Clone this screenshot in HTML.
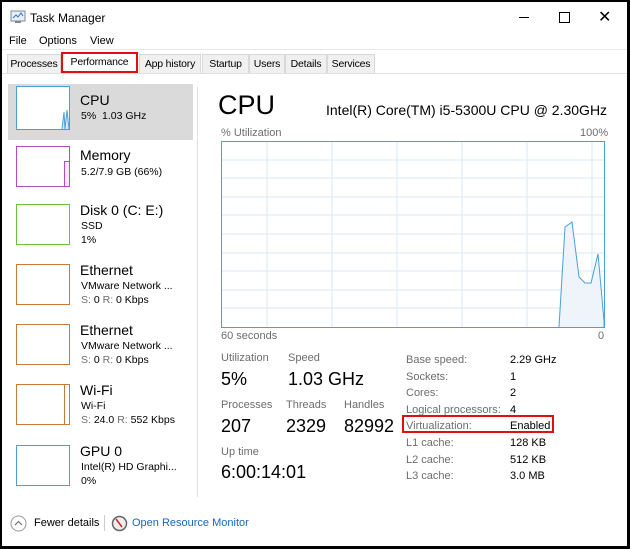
<!DOCTYPE html><html><head><style>
body{margin:0;width:630px;height:549px;overflow:hidden;background:#fff;font-family:"Liberation Sans",sans-serif;color:#000;position:relative}
.a{position:absolute;white-space:nowrap}
.s{font-size:11px}
.g{color:#6d6d6d}
.tab{position:absolute;top:54px;height:19px;background:#f0f0f0;border:1px solid #d9d9d9;border-bottom:none;font-size:10.5px;letter-spacing:-0.2px;line-height:19px;text-align:center;box-sizing:border-box}
.box{position:absolute;left:16px;width:54px;height:41px;box-sizing:border-box;border:1px solid}
.t1{font-size:14px}
.t2{font-size:10.5px}
</style></head><body>
<div class="a" style="left:0;top:0;border:2px solid #000;border-right-width:3px;border-bottom-width:3px;box-sizing:border-box;width:630px;height:549px"></div>
<svg class="a" style="left:10px;top:10px" width="16" height="14"><rect x="1" y="1" width="14" height="10" fill="#e8eef4" stroke="#7a8a99"/><polyline points="3,8 6,5 8,7 11,3 13,6" fill="none" stroke="#2a78c0"/><rect x="5" y="11" width="6" height="2" fill="#888"/></svg>
<div class="a" style="left:30px;top:11px;font-size:12px">Task Manager</div>
<div class="a" style="left:519px;top:17px;width:10px;height:1px;background:#000"></div>
<div class="a" style="left:559px;top:12px;width:9px;height:9px;border:1px solid #000"></div>
<div class="a" style="left:598px;top:7px;font-size:16px">✕</div>
<div class="a" style="left:9px;top:35px;font-size:11px">File</div>
<div class="a" style="left:39px;top:35px;font-size:11px">Options</div>
<div class="a" style="left:90px;top:35px;font-size:11px">View</div>
<div class="a" style="left:2px;top:49px;width:625px;height:1px;background:#e8e8e8"></div>
<div class="a" style="left:2px;top:73px;width:625px;height:1px;background:#e0e0e0"></div>
<div class="tab" style="left:7px;width:54px">Processes</div>
<div class="tab" style="left:61px;width:77px;top:52px;height:21px;background:#fff;border:2px solid #e01010;line-height:17px">Performance</div>
<div class="tab" style="left:139px;width:62px">App history</div>
<div class="tab" style="left:202px;width:47px">Startup</div>
<div class="tab" style="left:249px;width:36px">Users</div>
<div class="tab" style="left:285px;width:42px">Details</div>
<div class="tab" style="left:327px;width:48px">Services</div>

<div class="a" style="left:8px;top:84px;width:185px;height:56px;background:#dadada"></div>
<div class="box" style="top:86px;height:44px;border-color:#4a9fd8;background:#fff"></div>
<svg class="a" style="left:60px;top:100px" width="10" height="30"><polyline points="2,29 4,12 5,29 7,10 9,29" fill="#d8e8f4" stroke="#4a9fd8"/></svg>
<div class="a t1" style="left:80px;top:92px">CPU</div>
<div class="a t2" style="left:81px;top:110px">5%&nbsp; 1.03 GHz</div>

<div class="box" style="top:146px;border-color:#b44ac8"></div>
<div class="a" style="left:64px;top:161px;width:4px;height:24px;border:1px solid #b44ac8;background:#f4eaf6"></div>
<div class="a t1" style="left:80px;top:147px">Memory</div>
<div class="a t2" style="left:81px;top:166px">5.2/7.9 GB (66%)</div>

<div class="box" style="top:204px;border-color:#6cc040"></div>
<div class="a t1" style="left:80px;top:202px">Disk 0 (C: E:)</div>
<div class="a t2" style="left:81px;top:220px">SSD</div>
<div class="a t2" style="left:81px;top:234px">1%</div>

<div class="box" style="top:264px;border-color:#c87a3a"></div>
<div class="a t1" style="left:80px;top:262px">Ethernet</div>
<div class="a t2" style="left:81px;top:280px">VMware Network ...</div>
<div class="a t2" style="left:81px;top:294px"><span class="g">S:</span> 0 <span class="g">R:</span> 0 Kbps</div>

<div class="box" style="top:324px;border-color:#c87a3a"></div>
<div class="a t1" style="left:80px;top:322px">Ethernet</div>
<div class="a t2" style="left:81px;top:340px">VMware Network ...</div>
<div class="a t2" style="left:81px;top:354px"><span class="g">S:</span> 0 <span class="g">R:</span> 0 Kbps</div>

<div class="box" style="top:384px;border-color:#c87a3a"></div>
<div class="a" style="left:64px;top:385px;width:4px;height:39px;border-left:1px solid #c87a3a"></div>
<div class="a t1" style="left:80px;top:382px">Wi-Fi</div>
<div class="a t2" style="left:81px;top:400px">Wi-Fi</div>
<div class="a t2" style="left:81px;top:414px"><span class="g">S:</span> 24.0 <span class="g">R:</span> 552 Kbps</div>

<div class="box" style="top:445px;border-color:#4a9fd8"></div>
<div class="a t1" style="left:80px;top:443px">GPU 0</div>
<div class="a t2" style="left:81px;top:461px">Intel(R) HD Graphi...</div>
<div class="a t2" style="left:81px;top:475px">0%</div>

<div class="a" style="left:197px;top:87px;width:1px;height:410px;background:#e0e0e0"></div>

<div class="a" style="left:218px;top:90px;font-size:27px">CPU</div>
<div class="a" style="left:326px;top:102px;font-size:14px">Intel(R) Core(TM) i5-5300U CPU @ 2.30GHz</div>
<div class="a s g" style="left:221px;top:127px">% Utilization</div>
<div class="a s g" style="left:580px;top:127px">100%</div>
<svg class="a" style="left:221px;top:141px" width="384" height="187">
<g stroke="#d9eaf6" stroke-width="1">
<line x1="46" y1="0" x2="46" y2="187"/><line x1="111" y1="0" x2="111" y2="187"/><line x1="176" y1="0" x2="176" y2="187"/><line x1="241" y1="0" x2="241" y2="187"/><line x1="306" y1="0" x2="306" y2="187"/><line x1="371" y1="0" x2="371" y2="187"/>
<line x1="0" y1="19" x2="384" y2="19"/><line x1="0" y1="37" x2="384" y2="37"/><line x1="0" y1="56" x2="384" y2="56"/><line x1="0" y1="74" x2="384" y2="74"/><line x1="0" y1="93" x2="384" y2="93"/><line x1="0" y1="112" x2="384" y2="112"/><line x1="0" y1="130" x2="384" y2="130"/><line x1="0" y1="149" x2="384" y2="149"/><line x1="0" y1="167" x2="384" y2="167"/>
</g>
<polyline points="338,186 344,86 351,81 358,136 364,142 370,142 377,113 383,180 383,186" fill="#eef4fa" stroke="#4a9fd8" stroke-width="1"/>
<rect x="0.5" y="0.5" width="383" height="186" fill="none" stroke="#4a9fd8"/>
</svg>
<div class="a s g" style="left:221px;top:330px">60 seconds</div>
<div class="a s g" style="left:598px;top:330px">0</div>

<div class="a s g" style="left:221px;top:352px">Utilization</div>
<div class="a s g" style="left:288px;top:352px">Speed</div>
<div class="a" style="left:221px;top:369px;font-size:18px">5%</div>
<div class="a" style="left:288px;top:369px;font-size:18px">1.03 GHz</div>
<div class="a s g" style="left:221px;top:399px">Processes</div>
<div class="a s g" style="left:286px;top:399px">Threads</div>
<div class="a s g" style="left:344px;top:399px">Handles</div>
<div class="a" style="left:221px;top:416px;font-size:18px">207</div>
<div class="a" style="left:286px;top:416px;font-size:18px">2329</div>
<div class="a" style="left:344px;top:416px;font-size:18px">82992</div>
<div class="a s g" style="left:221px;top:446px">Up time</div>
<div class="a" style="left:221px;top:462px;font-size:18px">6:00:14:01</div>

<div class="a s g" style="left:406px;top:352px;line-height:16.6px">Base speed:<br>Sockets:<br>Cores:<br>Logical processors:<br>Virtualization:<br>L1 cache:<br>L2 cache:<br>L3 cache:</div>
<div class="a s" style="left:510px;top:352px;line-height:16.6px">2.29 GHz<br>1<br>2<br>4<br>Enabled<br>128 KB<br>512 KB<br>3.0 MB</div>
<div class="a" style="left:402px;top:415px;width:152px;height:18px;border:2px solid #e01010;box-sizing:border-box"></div>

<svg class="a" style="left:10px;top:515px" width="17" height="17"><circle cx="8.5" cy="8.5" r="7.5" fill="none" stroke="#999"/><polyline points="5,10 8.5,6.5 12,10" fill="none" stroke="#666"/></svg>
<div class="a s" style="left:34px;top:517px">Fewer details</div>
<div class="a" style="left:104px;top:515px;width:1px;height:16px;background:#ccc"></div>
<svg class="a" style="left:111px;top:515px" width="17" height="17"><circle cx="8.5" cy="8.5" r="7" fill="#eee" stroke="#666" stroke-width="1.5"/><line x1="5" y1="4" x2="11" y2="12" stroke="#d02020" stroke-width="1.5"/></svg>
<div class="a s" style="left:132px;top:517px;color:#1a66b8">Open Resource Monitor</div>
</body></html>
